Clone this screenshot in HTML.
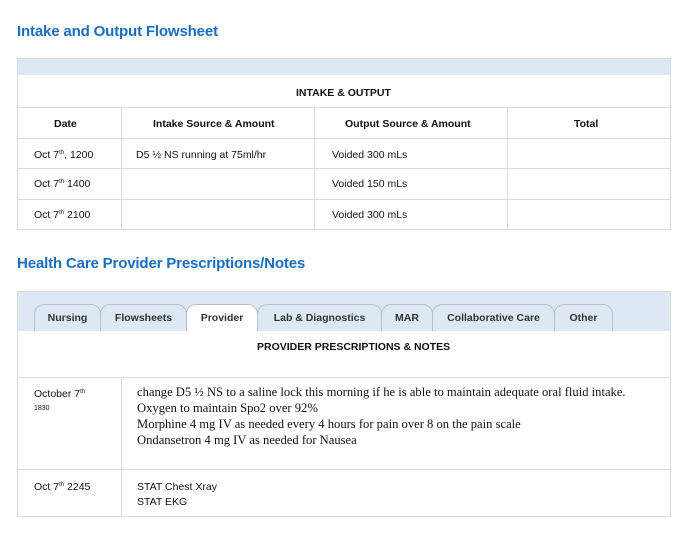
<!DOCTYPE html>
<html><head><meta charset="utf-8"><style>
body{margin:0;background:#fff;width:683px;height:533px;position:relative;font-family:"Liberation Sans",sans-serif;color:#111;overflow:hidden}
.h{position:absolute;left:17px;font-weight:bold;font-size:15.1px;color:#1a6ec0;letter-spacing:-0.2px}
.box{position:absolute;border:1px solid #dcdcdc;box-sizing:border-box}
.c{position:absolute;font-size:10.5px;white-space:nowrap}
.b{font-weight:bold}
.hl{position:absolute;height:1px;background:#dcdcdc}
.vl{position:absolute;width:1px;background:#dcdcdc}
sup{font-size:6px;vertical-align:4px}
.tab{position:absolute;top:304px;height:27px;box-sizing:border-box;border:1px solid #b8bec4;border-bottom:none;border-radius:10px 10px 0 0;background:#dce9f5;font-size:10.5px;font-weight:bold;color:#333;text-align:center;line-height:26px}
.serif{font-family:"Liberation Serif",serif;font-size:12.6px;line-height:16px}
</style></head><body>
<div class="h" style="top:23px">Intake and Output Flowsheet</div>
<div class="box" style="left:17px;top:58px;width:654px;height:172px"></div>
<div style="position:absolute;left:18px;top:59px;width:652px;height:16px;background:#dce9f5"></div>
<div class="hl" style="left:17px;width:654px;top:107px"></div>
<div class="hl" style="left:17px;width:654px;top:138px"></div>
<div class="hl" style="left:17px;width:654px;top:168px"></div>
<div class="hl" style="left:17px;width:654px;top:199px"></div>
<div class="vl" style="left:121px;top:107px;height:123px"></div>
<div class="vl" style="left:314px;top:107px;height:123px"></div>
<div class="vl" style="left:507px;top:107px;height:123px"></div>
<div class="c b" style="left:296px;top:87px">INTAKE &amp; OUTPUT</div>
<div class="c b" style="left:54px;top:118px">Date</div>
<div class="c b" style="left:153px;top:118px">Intake Source &amp; Amount</div>
<div class="c b" style="left:345px;top:118px">Output Source &amp; Amount</div>
<div class="c b" style="left:574px;top:118px">Total</div>
<div class="c" style="left:34px;top:149px">Oct 7<sup>th</sup>, 1200</div>
<div class="c" style="left:136px;top:149px">D5 ½ NS running at 75ml/hr</div>
<div class="c" style="left:332px;top:149px">Voided 300 mLs</div>
<div class="c" style="left:34px;top:178px">Oct 7<sup>th</sup> 1400</div>
<div class="c" style="left:332px;top:178px">Voided 150 mLs</div>
<div class="c" style="left:34px;top:209px">Oct 7<sup>th</sup> 2100</div>
<div class="c" style="left:332px;top:209px">Voided 300 mLs</div>

<div class="h" style="top:255px">Health Care Provider Prescriptions/Notes</div>
<div class="box" style="left:17px;top:291px;width:654px;height:226px"></div>
<div style="position:absolute;left:18px;top:292px;width:652px;height:39px;background:#dce9f5"></div>
<div class="tab" style="left:34px;width:67px">Nursing</div>
<div class="tab" style="left:100px;width:87px">Flowsheets</div>
<div class="tab" style="left:186px;width:72px;background:#fff">Provider</div>
<div class="tab" style="left:257px;width:125px">Lab &amp; Diagnostics</div>
<div class="tab" style="left:381px;width:52px">MAR</div>
<div class="tab" style="left:432px;width:123px">Collaborative Care</div>
<div class="tab" style="left:554px;width:59px">Other</div>
<div class="c b" style="left:257px;top:341px">PROVIDER PRESCRIPTIONS &amp; NOTES</div>
<div class="hl" style="left:17px;width:654px;top:377px"></div>
<div class="hl" style="left:17px;width:654px;top:469px"></div>
<div class="vl" style="left:121px;top:377px;height:140px"></div>
<div class="c" style="left:34px;top:388px">October 7<sup>th</sup></div>
<div class="c" style="left:34px;top:405px;font-size:7px">1830</div>
<div class="c serif" style="left:137px;top:384px">change D5 ½ NS to a saline lock this morning if he is able to maintain adequate oral fluid intake.<br>Oxygen to maintain Spo2 over 92%<br>Morphine 4 mg IV as needed every 4 hours for pain over 8 on the pain scale<br>Ondansetron 4 mg IV as needed for Nausea</div>
<div class="c" style="left:34px;top:481px">Oct 7<sup>th</sup> 2245</div>
<div class="c" style="left:137px;top:480px;line-height:15px">STAT Chest Xray<br>STAT EKG</div>
</body></html>
